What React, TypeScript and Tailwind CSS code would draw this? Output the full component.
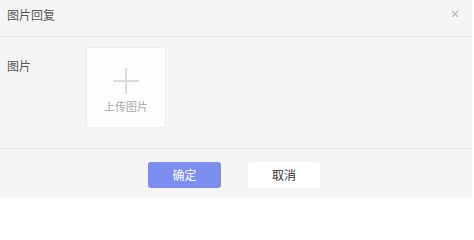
import React from "react";

export default function App() {
  const font = { fontFamily: '"Noto Sans CJK SC", "Noto Sans", sans-serif' };
  return (
    <div className="w-[474px] h-[200px] bg-white" style={font}>
      <div className="w-[472px] h-[197px] bg-[#f5f5f6] flex flex-col">
        <div className="h-[37px] flex items-center justify-between pl-[7px] pr-[13px] border-b border-[#e4e4e6] pb-[7px]">
          <span className="text-[12px] text-[#555] leading-none">图片回复</span>
          <svg width="8" height="8" viewBox="0 0 8 8" className="mb-[2px]">
            <path d="M1 1L7 7M7 1L1 7" stroke="#b8b8b8" strokeWidth="1.3" />
          </svg>
        </div>
        <div className="h-[112px] flex pl-[7px] pt-[10px] border-b border-[#e4e4e6]">
          <span className="text-[12px] text-[#555] leading-none mt-[13px] w-[79px]">图片</span>
          <div className="w-[80px] h-[81px] bg-[#fdfdfd] border border-[#eeeeee] flex flex-col items-center pt-[19px]">
            <svg width="28" height="28" viewBox="0 0 28 28">
              <path d="M14 1V27M1 14H27" stroke="#dcdcdc" strokeWidth="2.2" />
            </svg>
            <span className="text-[11px] text-[#a9a9a9] leading-none mt-[6px]">上传图片</span>
          </div>
        </div>
        <div className="flex pl-[148px] pt-[13px] gap-[27px]">
          <button className="w-[73px] h-[26px] rounded-[3px] bg-[#7c8ef0] text-white text-[12px] leading-none">确定</button>
          <button className="w-[72px] h-[26px] rounded-[3px] bg-white text-[#333] text-[12px] leading-none">取消</button>
        </div>
      </div>
    </div>
  );
}
